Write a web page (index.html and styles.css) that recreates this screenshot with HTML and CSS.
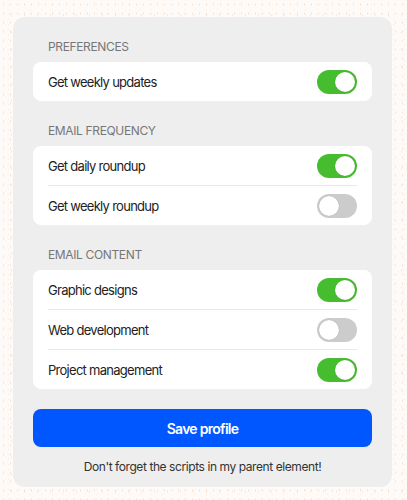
FILE: index.html
```html
<!DOCTYPE html>
<html lang="en">
<head>
  <meta charset="UTF-8">
  <title>Profile settings</title>
  <link rel="stylesheet" href="styles.css">
</head>
<body>

  <form class="card" onsubmit="event.preventDefault()">
    <div class="section">
      <div class="section-title">Preferences</div>
      <div class="group">
        <label class="row">Get weekly updates <input type="checkbox" class="switch" checked></label>
      </div>
    </div>

    <div class="section">
      <div class="section-title">Email frequency</div>
      <div class="group">
        <label class="row">Get daily roundup <input type="checkbox" class="switch" checked></label>
        <label class="row">Get weekly roundup <input type="checkbox" class="switch"></label>
      </div>
    </div>

    <div class="section">
      <div class="section-title">Email content</div>
      <div class="group">
        <label class="row">Graphic designs <input type="checkbox" class="switch" checked></label>
        <label class="row">Web development <input type="checkbox" class="switch"></label>
        <label class="row">Project management <input type="checkbox" class="switch" checked></label>
      </div>
    </div>

    <button type="submit">Save profile</button>
    <p class="note">Don't forget the scripts in my parent element!</p>
  </form>

</body>
</html>
```

FILE: styles.css
```css
body {
  margin: 0;
  font-family: Inter, "Noto Sans", sans-serif;
  letter-spacing: -0.045em;
  background-color: #fdfaf7;
  background-image:
    radial-gradient(rgba(238, 160, 110, 0.3) 0.5px, transparent 1px),
    radial-gradient(rgba(238, 180, 130, 0.2) 0.5px, transparent 1px),
    radial-gradient(rgba(230, 150, 100, 0.2) 0.5px, transparent 1px);
  background-size: 7px 9px, 11px 5px, 13px 17px;
  background-position: 0 0, 3px 2px, 5px 7px;
  min-height: 500px;
}
.card {
  width: 379px;
  box-sizing: border-box;
  margin: 17px 0 0 13px;
  padding: 22px 20px 13px;
  background: #eeeeee;
  border-radius: 12px;
}
.section {
  margin-bottom: 22px;
}
.section:last-of-type {
  margin-bottom: 20px;
}
.section-title {
  font-size: 12px;
  line-height: 15px;
  letter-spacing: -0.03em;
  color: #777;
  text-transform: uppercase;
  padding-left: 15px;
  margin-bottom: 8px;
}
.group {
  background: white;
  border-radius: 8px;
  padding: 0 15px;
}
.row {
  display: flex;
  align-items: center;
  justify-content: space-between;
  height: 39px;
  font-size: 13px;
  color: #222;
}
.row + .row {
  border-top: 1px solid #e8e8e8;
}
.switch {
  appearance: none;
  -webkit-appearance: none;
  position: relative;
  margin: 0;
  width: 40px;
  height: 24px;
  border-radius: 12px;
  background: #cccccc;
  cursor: pointer;
}
.switch::after {
  content: "";
  position: absolute;
  top: 2px;
  left: 2px;
  width: 20px;
  height: 20px;
  border-radius: 50%;
  background: white;
  box-shadow: 0 0 1px rgba(0,0,0,0.3);
}
.switch:checked {
  background: #45bd2e;
}
.switch:checked::after {
  left: 18px;
}
button {
  display: block;
  width: 100%;
  height: 38px;
  border: none;
  border-radius: 8px;
  background: #0057ff;
  color: white;
  font-family: inherit;
  font-size: 14px;
  font-weight: 600;
  letter-spacing: inherit;
  cursor: pointer;
}
.note {
  margin: 12px 0 0;
  font-size: 12px;
  line-height: 15px;
  letter-spacing: -0.035em;
  color: #333;
  text-align: center;
}
```
